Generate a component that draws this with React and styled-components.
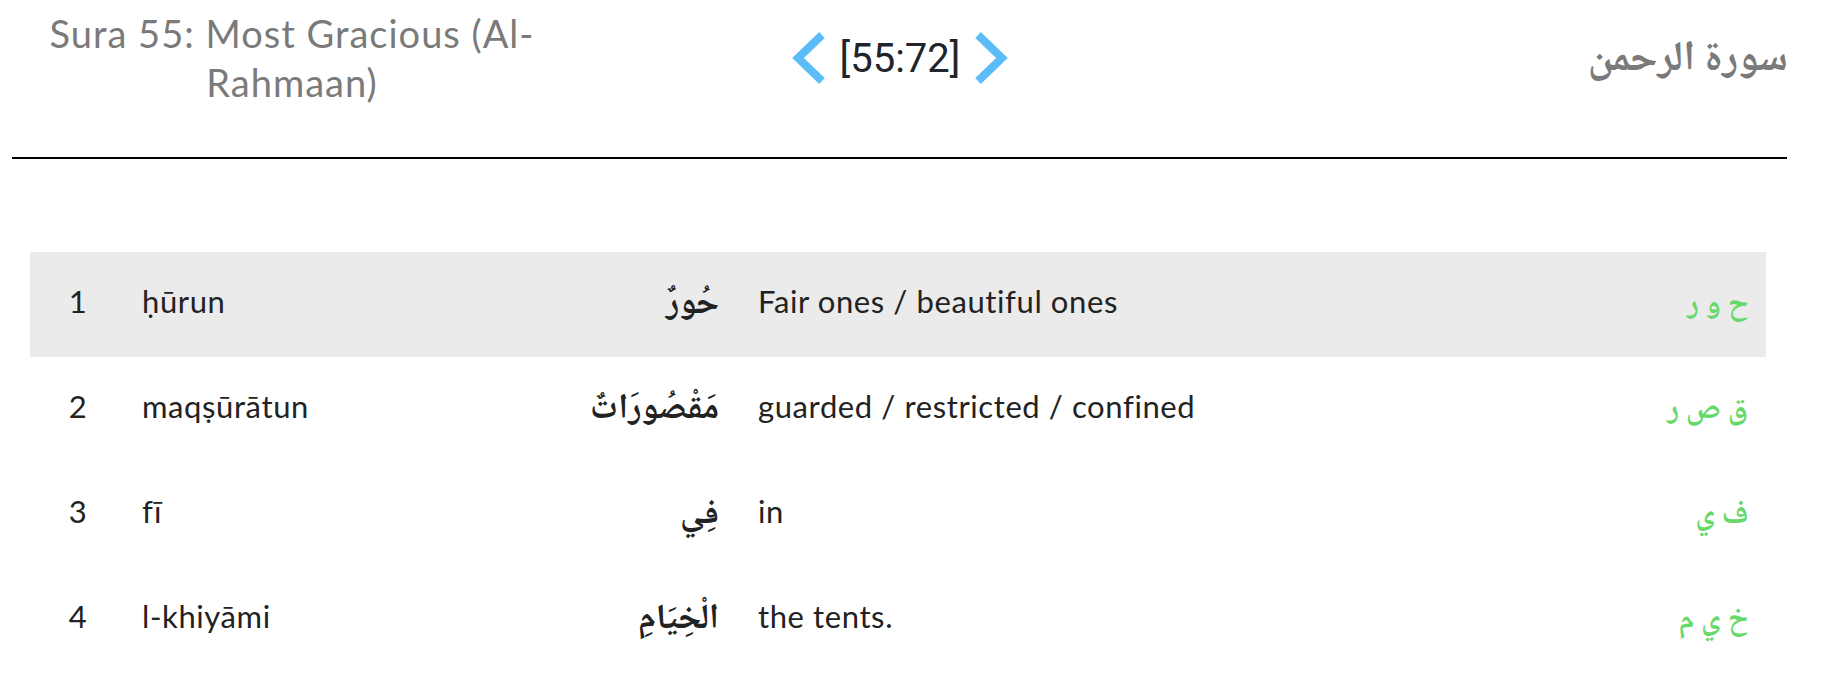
import React from 'react'
import styled, { createGlobalStyle } from 'styled-components'

const words = [
  { id: 1, translit: 'ḥūrun', arabic: 'حُورٌ', english: 'Fair ones / beautiful ones', root: 'ح و ر' },
  { id: 2, translit: 'maqṣūrātun', arabic: 'مَقْصُورَاتٌ', english: 'guarded / restricted / confined', root: 'ق ص ر' },
  { id: 3, translit: 'fī', arabic: 'فِي', english: 'in', root: 'ف ي' },
  { id: 4, translit: 'l-khiyāmi', arabic: 'الْخِيَامِ', english: 'the tents.', root: 'خ ي م' },
]

function Chevron({ dir }) {
  const pts = dir === 'left' ? '30,3 6,26 30,49' : '4,3 28,26 4,49'
  return (
    <svg width="34" height="52" viewBox="0 0 34 52">
      <polyline points={pts} fill="none" stroke="#5bbcf8" strokeWidth="8" />
    </svg>
  )
}

function App() {
  return (
    <Page>
      <GlobalStyle />
      <Header>
        <Title>Sura 55: Most Gracious (Al-Rahmaan)</Title>
        <Nav>
          <NavButton aria-label="previous"><Chevron dir="left" /></NavButton>
          <VerseRef>[55:72]</VerseRef>
          <NavButton aria-label="next"><Chevron dir="right" /></NavButton>
        </Nav>
        <ArabicTitle>سورة الرحمن</ArabicTitle>
      </Header>
      <Rule />
      <WordTable>
        {words.map((w, i) => (
          <WordRow key={w.id} $shaded={i === 0}>
            <Num>{w.id}</Num>
            <Translit>{w.translit}</Translit>
            <ArabicWord>{w.arabic}</ArabicWord>
            <English>{w.english}</English>
            <Root>{w.root}</Root>
          </WordRow>
        ))}
      </WordTable>
    </Page>
  )
}

const GlobalStyle = createGlobalStyle`
  body {
    margin: 0;
    background: #fff;
    font-family: Lato, "Open Sans", sans-serif;
  }
`

const Page = styled.div`
  width: 1824px;
  height: 682px;
  overflow: hidden;
`

const Header = styled.header`
  display: grid;
  grid-template-columns: 560px 1fr 560px;
  align-items: center;
  padding: 9px 36px 0 12px;
`

const Title = styled.h1`
  margin: 0 auto;
  width: 540px;
  text-align: center;
  font-family: Lato, sans-serif;
  font-weight: 400;
  font-size: 38px;
  letter-spacing: 1px;
  line-height: 49px;
  color: #7a7a7a;
`

const Nav = styled.div`
  display: flex;
  align-items: center;
  justify-content: center;
  gap: 14px;
`

const NavButton = styled.button`
  border: none;
  background: none;
  padding: 0;
  display: flex;
  cursor: pointer;
`

const VerseRef = styled.span`
  font-family: Roboto, sans-serif;
  font-size: 40px;
  color: #212529;
`

const ArabicTitle = styled.div`
  text-align: right;
  direction: rtl;
  padding-top: 6px;
  font-family: "Noto Naskh Arabic", "Noto Sans Arabic", "DejaVu Sans", sans-serif;
  font-weight: 700;
  font-size: 42px;
  color: #7a7a7a;
`

const Rule = styled.hr`
  margin: 50px 37px 0 12px;
  border: none;
  border-top: 2px solid #000;
`

const WordTable = styled.div`
  margin: 93px 0 0 30px;
  width: 1736px;
`

const WordRow = styled.div`
  display: grid;
  grid-template-columns: 96px 314px 295px 1fr 300px;
  align-items: baseline;
  height: 105px;
  padding-top: 30px;
  box-sizing: border-box;
  background: ${p => (p.$shaded ? '#ebebeb' : 'transparent')};
  color: #222;
  font-size: 31px;
  letter-spacing: 0.6px;
  line-height: 38px;
`

const Num = styled.div`
  text-align: center;
`

const Translit = styled.div`
  padding-left: 16px;
`

const ArabicWord = styled.div`
  text-align: right;
  padding-right: 16px;
  direction: rtl;
  letter-spacing: 0;
  font-family: "Noto Naskh Arabic", "Noto Sans Arabic", "DejaVu Sans", sans-serif;
  font-weight: 700;
  font-size: 35px;
`

const English = styled.div`
  padding-left: 23px;
`

const Root = styled.div`
  text-align: right;
  padding-right: 18px;
  direction: rtl;
  letter-spacing: 0;
  font-family: "Noto Naskh Arabic", "Noto Sans Arabic", "DejaVu Sans", sans-serif;
  font-weight: 700;
  font-size: 31px;
  color: #66d96a;
`

export default App
